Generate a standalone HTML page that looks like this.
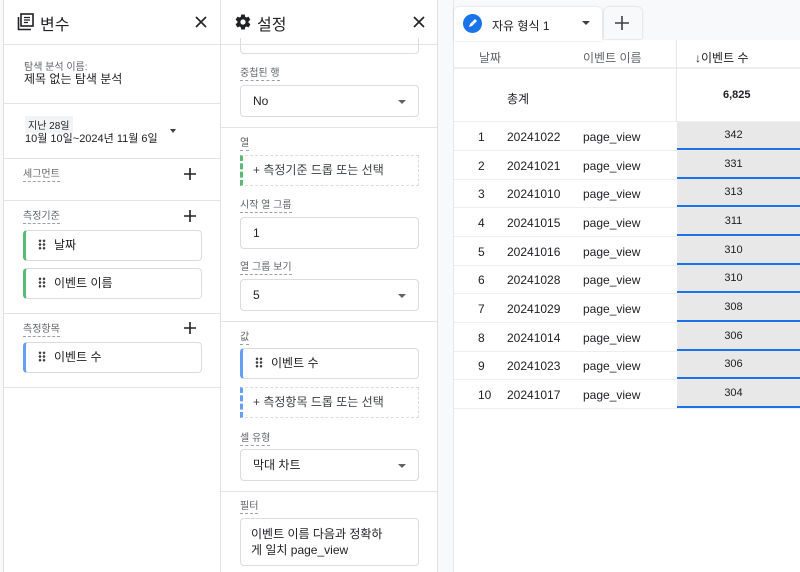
<!DOCTYPE html>
<html><head><meta charset="utf-8"><style>
*{box-sizing:border-box;margin:0;padding:0}
body{width:800px;height:572px;overflow:hidden;background:#fff;font-family:"Liberation Sans","Noto Sans CJK KR",sans-serif;color:#202124;position:relative}
.a{position:absolute}
.t{font-size:12px}
.lbl{font-size:10px;color:#5f6368;border-bottom:1px dashed #9aa0a6;line-height:13px}
.hr{position:absolute;height:1px;background:#e3e3e3}
.chip{position:absolute;border:1px solid #dadce0;border-radius:4px;background:#fff;font-size:12px;height:31px;line-height:29px}
.dots{display:inline-block;width:8px;height:11px;background:radial-gradient(circle,#3c4043 1.2px,transparent 1.4px) 0 0/4px 3.7px;vertical-align:middle;margin:-2px 8px 0 12px}
.sel{position:absolute;border:1px solid #dadce0;border-radius:4px;background:#fff;font-size:12px;height:32px;line-height:30px;padding-left:12px}
.sel.ar:after{content:"";position:absolute;right:12px;top:14px;border:4px solid transparent;border-top:4px solid #5f6368;border-bottom:0}
.drop{position:absolute;border:1px dashed #dadce0;font-size:12px;height:31px;line-height:29px;color:#3c4043}
.row{position:absolute;left:454px;width:346px;height:29px;border-bottom:1px solid #eee;font-size:12px;line-height:30px}
.row span{position:absolute}
.bar{position:absolute;left:223px;right:0;top:0;bottom:0;background:#e8e8e8;border-bottom:2px solid #1a73e8;text-align:center;font-size:11px;line-height:26px;padding-right:10px}
</style></head><body>
<div class="a" style="left:0;top:0;width:4px;height:572px;background:#f8f9fa"></div>
<div class="a" style="left:3px;top:0;width:1px;height:572px;background:#e0e0e0"></div>
<div class="a" style="left:220px;top:0;width:1px;height:572px;background:#e0e0e0"></div>
<div class="a" style="left:437px;top:0;width:1px;height:572px;background:#e0e0e0"></div>
<div class="a" style="left:438px;top:0;width:16px;height:572px;background:#f8f9fa;border-right:1px solid #e6e6e6"></div>
<div class="hr" style="left:4px;top:44px;width:433px"></div>
<svg class="a" style="left:17px;top:13px" width="18" height="18" viewBox="0 0 18 18"><rect x="4" y="1" width="12" height="12" fill="none" stroke="#202124" stroke-width="1.6"/><path d="M1.5 4v12.5H14" fill="none" stroke="#202124" stroke-width="1.6"/><path d="M7 4.5h6M7 7h6M7 9.5h4" stroke="#202124" stroke-width="1.3"/></svg>
<div class="a" style="left:40px;top:11px;font-size:16px">변수</div>
<svg class="a" style="left:195px;top:16px" width="12" height="12" viewBox="0 0 12 12"><path d="M1 1L11 11M11 1L1 11" stroke="#202124" stroke-width="1.6"/></svg>
<div class="a" style="left:24px;top:58px;font-size:10px;color:#5f6368">탐색 분석 이름:</div>
<div class="a t" style="left:24px;top:70px">제목 없는 탐색 분석</div>
<div class="hr" style="left:4px;top:103px;width:216px"></div>
<div class="a" style="left:25px;top:116px;font-size:10px;background:#f1f3f4;padding:1px 3px">지난 28일</div>
<div class="a" style="left:25px;top:130px;font-size:11px">10월 10일~2024년 11월 6일</div>
<div class="a" style="left:170px;top:129px;border:3px solid transparent;border-top:4px solid #3c4043"></div>
<div class="hr" style="left:4px;top:158px;width:216px"></div>
<div class="a lbl" style="left:23px;top:168px">세그먼트</div>
<svg class="a" style="left:184px;top:168px" width="12" height="12"><path d="M6 0v12M0 6h12" stroke="#202124" stroke-width="1.6"/></svg>
<div class="hr" style="left:4px;top:200px;width:216px"></div>
<div class="a lbl" style="left:23px;top:210px">측정기준</div>
<svg class="a" style="left:184px;top:210px" width="12" height="12"><path d="M6 0v12M0 6h12" stroke="#202124" stroke-width="1.6"/></svg>
<div class="chip" style="left:23px;top:230px;width:179px;border-left:3px solid #5bb974"><span class="dots"></span>날짜</div>
<div class="chip" style="left:23px;top:268px;width:179px;border-left:3px solid #5bb974"><span class="dots"></span>이벤트 이름</div>
<div class="hr" style="left:4px;top:313px;width:216px"></div>
<div class="a lbl" style="left:23px;top:323px">측정항목</div>
<svg class="a" style="left:184px;top:322px" width="12" height="12"><path d="M6 0v12M0 6h12" stroke="#202124" stroke-width="1.6"/></svg>
<div class="chip" style="left:23px;top:342px;width:179px;border-left:3px solid #669df6"><span class="dots"></span>이벤트 수</div>
<div class="hr" style="left:4px;top:387px;width:216px"></div>
<svg class="a" style="left:234px;top:13px" width="18" height="18" viewBox="0 0 24 24"><path fill="#202124" d="M19.4 13c.04-.33.06-.66.06-1s-.02-.67-.06-1l2.1-1.65c.2-.15.24-.42.12-.64l-2-3.460c-.12-.22-.39-.3-.61-.22l-2.49 1c-.52-.4-1.08-.73-1.69-.98l-.38-2.65A.49.49 0 0 0 14 2h-4c-.25 0-.46.18-.49.42l-.38 2.65c-.61.25-1.170.59-1.69.98l-2.49-1c-.23-.09-.49 0-.61.22l-2 3.46c-.13.22-.07.49.12.64L4.57 11c-.04.33-.07.67-.07 1s.03.67.07 1l-2.11 1.65c-.19.15-.24.42-.12.64l2 3.46c.12.22.39.3.61.22l2.49-1c.52.4 1.08.73 1.69.98l.38 2.65c.03.24.24.42.49.42h4c.25 0 .46-.18.49-.42l.38-2.65c.61-.25 1.17-.59 1.69-.98l2.49 1c.23.09.49 0 .61-.22l2-3.46c.12-.22.07-.49-.12-.64L19.4 13zM12 15.5A3.5 3.5 0 1 1 12 8.5a3.5 3.5 0 0 1 0 7z"/></svg>
<div class="a" style="left:257px;top:11px;font-size:16px">설정</div>
<svg class="a" style="left:413px;top:16px" width="12" height="12" viewBox="0 0 12 12"><path d="M1 1L11 11M11 1L1 11" stroke="#202124" stroke-width="1.6"/></svg>
<div class="a" style="left:240px;top:38px;width:179px;height:16px;border:1px solid #dadce0;border-top:0;border-radius:0 0 4px 4px"></div>
<div class="a lbl" style="left:240px;top:67px">중첩된 행</div>
<div class="sel ar" style="left:240px;top:85px;width:179px">No</div>
<div class="hr" style="left:221px;top:127px;width:216px"></div>
<div class="a lbl" style="left:240px;top:137px">열</div>
<div class="drop" style="left:240px;top:155px;width:179px;border-left:3px dashed #5bb974;padding-left:10px">+ 측정기준 드롭 또는 선택</div>
<div class="a lbl" style="left:240px;top:199px">시작 열 그룹</div>
<div class="sel" style="left:240px;top:217px;width:179px">1</div>
<div class="a lbl" style="left:240px;top:261px">열 그룹 보기</div>
<div class="sel ar" style="left:240px;top:279px;width:179px">5</div>
<div class="hr" style="left:221px;top:321px;width:216px"></div>
<div class="a lbl" style="left:240px;top:331px">값</div>
<div class="chip" style="left:240px;top:348px;width:179px;border-left:3px solid #669df6"><span class="dots"></span>이벤트 수</div>
<div class="drop" style="left:240px;top:387px;width:179px;border-left:3px dashed #669df6;padding-left:10px">+ 측정항목 드롭 또는 선택</div>
<div class="a lbl" style="left:240px;top:432px">셀 유형</div>
<div class="sel ar" style="left:240px;top:449px;width:179px">막대 차트</div>
<div class="hr" style="left:221px;top:491px;width:216px"></div>
<div class="a lbl" style="left:240px;top:500px">필터</div>
<div class="a" style="left:240px;top:518px;width:179px;height:48px;border:1px solid #dadce0;border-radius:4px;font-size:12px;line-height:16px;padding:7px 28px 7px 10px">이벤트 이름 다음과 정확하게 일치 page_view</div>
<div class="a" style="left:454px;top:0;width:346px;height:40px;background:#f8f9fa"></div>
<div class="a" style="left:454px;top:7px;width:148px;height:34px;background:#fff;border-radius:5px 5px 0 0;box-shadow:0 0 2px rgba(0,0,0,.15)"></div>
<div class="a" style="left:463px;top:14px;width:19px;height:19px;border-radius:50%;background:#1a73e8"></div>
<svg class="a" style="left:466px;top:17px" width="13" height="13" viewBox="0 0 13 13"><path d="M3 10l1-3 5-5 2 2-5 5z" fill="#fff"/></svg>
<div class="a t" style="left:492px;top:17px">자유 형식 1</div>
<div class="a" style="left:582px;top:21px;border:4px solid transparent;border-top:4px solid #3c4043"></div>
<div class="a" style="left:604px;top:7px;width:38px;height:32px;background:#f8f9fa;border-radius:5px 5px 0 0;box-shadow:0 0 2px rgba(0,0,0,.2)"></div>
<svg class="a" style="left:615px;top:16px" width="14" height="14"><path d="M7 0v14M0 7h14" stroke="#3c4043" stroke-width="1.6"/></svg>
<div class="a" style="left:454px;top:40px;width:346px;height:29px;border-bottom:2px solid #eee"></div>
<div class="a" style="left:676px;top:40px;width:1px;height:82px;background:#e6e6e6"></div>
<div class="a t" style="left:479px;top:49px;color:#5f6368">날짜</div>
<div class="a t" style="left:583px;top:49px;color:#5f6368">이벤트 이름</div>
<div class="a t" style="left:695px;top:49px;color:#202124">↓이벤트 수</div>
<div class="a" style="left:454px;top:69px;width:346px;height:53px;border-bottom:1px solid #eee"></div>
<div class="a t" style="left:507px;top:90px">총계</div>
<div class="a" style="left:723px;top:89px;font-size:11px;font-weight:bold">6,825</div>
<div class="row" style="top:122px"><span style="left:24px">1</span><span style="left:53px">20241022</span><span style="left:129px">page_view</span><div class="bar">342</div></div>
<div class="row" style="top:151px"><span style="left:24px">2</span><span style="left:53px">20241021</span><span style="left:129px">page_view</span><div class="bar">331</div></div>
<div class="row" style="top:179px"><span style="left:24px">3</span><span style="left:53px">20241010</span><span style="left:129px">page_view</span><div class="bar">313</div></div>
<div class="row" style="top:208px"><span style="left:24px">4</span><span style="left:53px">20241015</span><span style="left:129px">page_view</span><div class="bar">311</div></div>
<div class="row" style="top:237px"><span style="left:24px">5</span><span style="left:53px">20241016</span><span style="left:129px">page_view</span><div class="bar">310</div></div>
<div class="row" style="top:265px"><span style="left:24px">6</span><span style="left:53px">20241028</span><span style="left:129px">page_view</span><div class="bar">310</div></div>
<div class="row" style="top:294px"><span style="left:24px">7</span><span style="left:53px">20241029</span><span style="left:129px">page_view</span><div class="bar">308</div></div>
<div class="row" style="top:323px"><span style="left:24px">8</span><span style="left:53px">20241014</span><span style="left:129px">page_view</span><div class="bar">306</div></div>
<div class="row" style="top:351px"><span style="left:24px">9</span><span style="left:53px">20241023</span><span style="left:129px">page_view</span><div class="bar">306</div></div>
<div class="row" style="top:380px"><span style="left:24px">10</span><span style="left:53px">20241017</span><span style="left:129px">page_view</span><div class="bar">304</div></div>
</body></html>
